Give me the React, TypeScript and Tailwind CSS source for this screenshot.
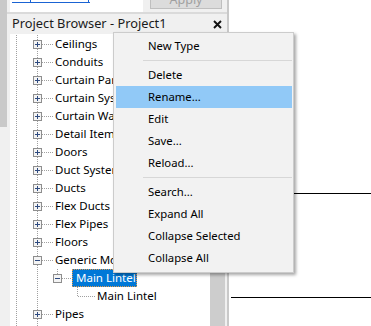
import type { ReactNode } from "react";

const FONT = "font-['Noto_Sans','Open_Sans',sans-serif]";

type Node = {
  label: string;
  kind: "plus" | "minus" | "type" | "leaf";
  selected?: boolean;
};

const TREE: Node[] = [
  { label: "Ceilings", kind: "plus" },
  { label: "Conduits", kind: "plus" },
  { label: "Curtain Panels", kind: "plus" },
  { label: "Curtain Systems", kind: "plus" },
  { label: "Curtain Wall Mullions", kind: "plus" },
  { label: "Detail Items", kind: "plus" },
  { label: "Doors", kind: "plus" },
  { label: "Duct Systems", kind: "plus" },
  { label: "Ducts", kind: "plus" },
  { label: "Flex Ducts", kind: "plus" },
  { label: "Flex Pipes", kind: "plus" },
  { label: "Floors", kind: "plus" },
  { label: "Generic Models", kind: "minus" },
  { label: "Main Lintel", kind: "type", selected: true },
  { label: "Main Lintel", kind: "leaf" },
  { label: "Pipes", kind: "plus" },
  { label: "Plumbing Fixtures", kind: "plus" },
];

const MENU: (string | null)[] = [
  "New Type",
  null,
  "Delete",
  "Rename...",
  "Edit",
  "Save...",
  "Reload...",
  null,
  "Search...",
  "Expand All",
  "Collapse Selected",
  "Collapse All",
];

function Dot({ x1, y1, x2, y2 }: { x1: number; y1: number; x2: number; y2: number }) {
  return (
    <line
      x1={x1}
      y1={y1}
      x2={x2}
      y2={y2}
      stroke="#a0a0a0"
      strokeDasharray="1 1"
      shapeRendering="crispEdges"
    />
  );
}

// 9px expander box, x is its left pixel column
function Box({ x, minus }: { x: number; minus?: boolean }) {
  return (
    <g shapeRendering="crispEdges">
      <rect x={x + 0.5} y={5.5} width={8} height={8} fill="#f4f4f4" stroke="#8e8e8e" />
      <line x1={x + 2} y1={9.5} x2={x + 7} y2={9.5} stroke="#2e4a7f" />
      {!minus && <line x1={x + 4.5} y1={7} x2={x + 4.5} y2={12} stroke="#2e4a7f" />}
    </g>
  );
}

function Guides({ width, children }: { width: number; children: ReactNode }) {
  return (
    <svg width={width} height={18} className="shrink-0">
      <Dot x1={6.5} y1={0} x2={6.5} y2={18} />
      {children}
    </svg>
  );
}

function TreeRow({ node }: { node: Node }) {
  if (node.kind === "type") {
    return (
      <div className="flex h-[18px] items-center">
        <Guides width={62}>
          <Dot x1={27.5} y1={0} x2={27.5} y2={18} />
          <Dot x1={47.5} y1={0} x2={47.5} y2={5} />
          <Box x={43} minus />
          <Dot x1={52} y1={9.5} x2={62} y2={9.5} />
        </Guides>
        <div className="flex h-[18px] w-[65px] items-center border border-dotted border-[#e39a4c] bg-[#0078d7] pl-[3px] text-white">
          {node.label}
        </div>
      </div>
    );
  }
  if (node.kind === "leaf") {
    return (
      <div className="flex h-[18px] items-center">
        <Guides width={87}>
          <Dot x1={27.5} y1={0} x2={27.5} y2={18} />
          <Dot x1={67.5} y1={0} x2={67.5} y2={9} />
          <Dot x1={68} y1={9.5} x2={86} y2={9.5} />
        </Guides>
        <span className="whitespace-nowrap">{node.label}</span>
      </div>
    );
  }
  return (
    <div className="flex h-[18px] items-center">
      <Guides width={45}>
        <Dot x1={27.5} y1={0} x2={27.5} y2={5} />
        <Dot x1={27.5} y1={14} x2={27.5} y2={18} />
        <Box x={23} minus={node.kind === "minus"} />
        <Dot x1={32} y1={9.5} x2={43} y2={9.5} />
        {node.kind === "minus" && <Dot x1={47.5} y1={14} x2={47.5} y2={18} />}
      </Guides>
      <span className="whitespace-nowrap">{node.label}</span>
    </div>
  );
}

function ContextMenu() {
  return (
    <div
      className={`absolute left-[113px] top-[32px] w-[181px] border border-[#cccccc] bg-[#f2f2f2] pb-[3px] pl-[2px] pr-[1px] pt-[2px] text-[11.3px] text-black shadow-[2px_2px_3px_rgba(0,0,0,0.35)] ${FONT}`}
    >
      {MENU.map((item, i) =>
        item === null ? (
          <div key={i} className="ml-[27px] py-[3px]">
            <div className="h-px bg-[#d7d7d7]" />
          </div>
        ) : (
          <div
            key={i}
            className={`flex h-[22px] items-center pl-[32px] ${item === "Rename..." ? "bg-[#91c9f7]" : ""}`}
          >
            {item}
          </div>
        )
      )}
    </div>
  );
}

export default function App() {
  return (
    <div className={`relative flex h-[326px] w-[371px] overflow-hidden bg-white ${FONT}`}>
      {/* left edge */}
      <div className="flex w-[7px] flex-col">
        <div className="h-[127px] bg-[#c9c9c9]" />
        <div className="flex-1 bg-[#f0f0f0]" />
      </div>

      {/* project browser panel */}
      <div className="flex w-[222px] flex-col border-r-2 border-[#c9c9c9] bg-[#f0f0f0]">
        <div className="flex h-[12px] overflow-hidden">
          <div className="w-[3px]" />
          <div className="w-[133px] bg-white">
            <svg width={133} height={12}>
              <g stroke="#1a63d3" shapeRendering="crispEdges">
                <line x1={2} y1={2.5} x2={80} y2={2.5} />
                <line x1={20.5} y1={0} x2={20.5} y2={3} />
                <line x1={78.5} y1={0} x2={78.5} y2={3} />
              </g>
            </svg>
          </div>
          <div className="w-[7px]" />
          <div className="flex h-[18px] w-[72px] -translate-y-[9px] items-center justify-center border border-[#bfbfbf] bg-[#dcdcdc] text-[12.5px] text-[#a0a0a0]">
            Apply
          </div>
        </div>
        <div className="h-[2px] bg-[#dadada]" />

        <div className="flex h-[20px] items-center justify-between pl-[5px] pr-[5px] text-[12.8px] text-[#1b1b1b]">
          <span>Project Browser - Project1</span>
          <svg width={9} height={9} viewBox="0 0 9 9">
            <path d="M1 1 L8 8 M8 1 L1 8" stroke="#111" strokeWidth={1.9} />
          </svg>
        </div>

        <div className="flex flex-1 overflow-hidden">
          <div className="w-[3px]" />
          <div className="w-[200px] overflow-hidden bg-white pt-[1px] text-[11.5px] text-black">
            {TREE.map((node, i) => (
              <TreeRow key={i} node={node} />
            ))}
          </div>
          <div className="w-[15px] bg-[#cdcdcd]" />
          <div className="w-[2px] bg-[#f0f0f0]" />
        </div>
      </div>

      {/* drawing canvas */}
      <div className="relative flex-1 bg-white">
        <div className="absolute left-[40px] right-0 top-[193px] h-px bg-black" />
        <div className="absolute left-[2px] right-0 top-[297px] h-px bg-black" />
      </div>

      <ContextMenu />
    </div>
  );
}
